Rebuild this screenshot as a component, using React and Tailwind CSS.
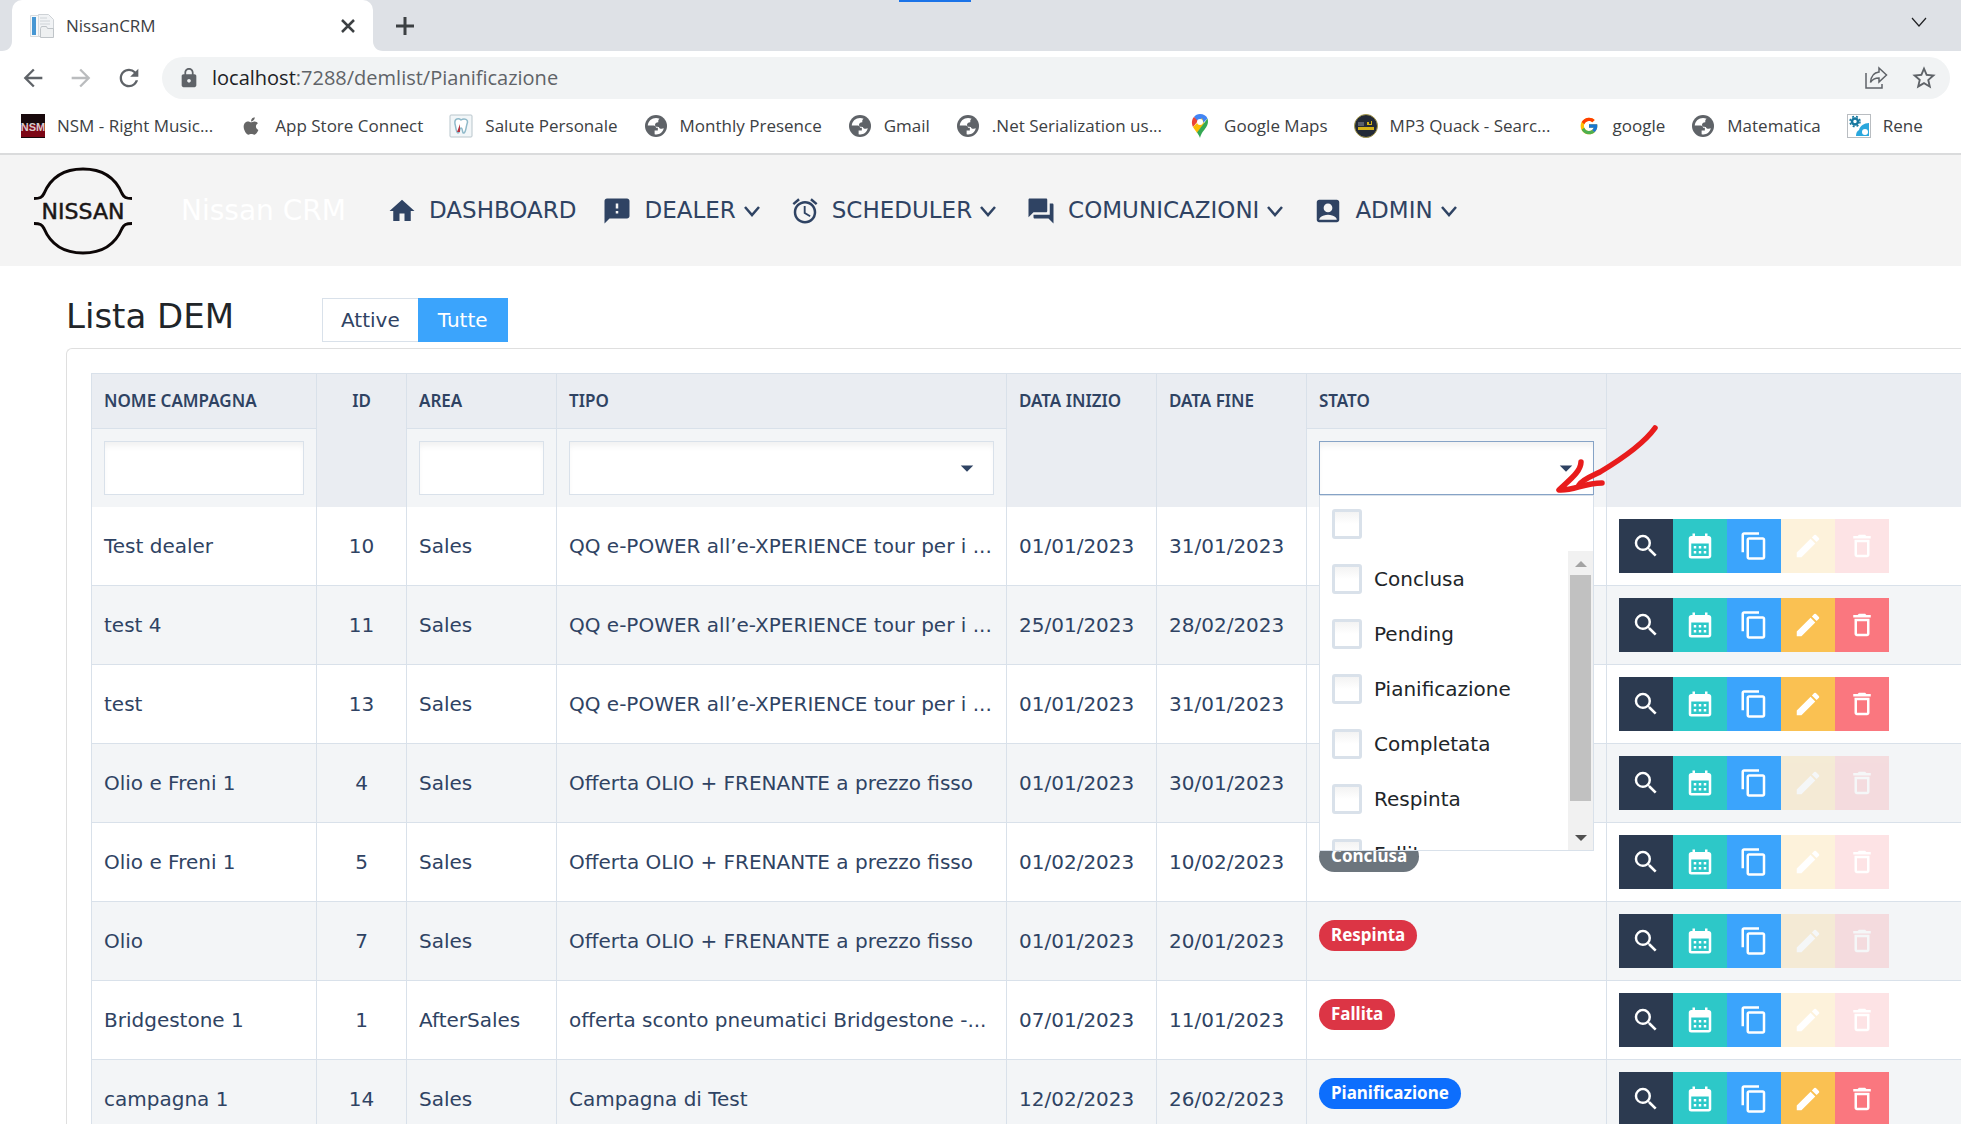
import React, { useState } from 'react';
import {
	MdAccountBox,
	MdAlarm,
	MdArrowBack,
	MdArrowDropDown,
	MdArrowForward,
	MdCalendarMonth,
	MdContentCopy,
	MdDeleteOutline,
	MdEdit,
	MdFeedback,
	MdForum,
	MdHome,
	MdLock,
	MdRefresh,
	MdSearch,
	MdStarBorder,
} from 'react-icons/md';
import { FaApple } from 'react-icons/fa';
import { FcGoogle } from 'react-icons/fc';

const GlobeIcon = () => (
	<svg viewBox="0 0 24 24" className="size-[22px]">
		<circle cx="12" cy="12" r="12" fill="#5f6368" />
		<path d="M3 11.500h6.500c1.500 0 2.500 1 2.500 2.500h2v3h-3.500v4c5 1 9-2 10-6.500-2 1-5 .5-5.500-1.500-1 0-3.500.2-4-1.500-.5-2 1-3.500 3.500-3.500V6c0-1 1-1.500 1.500-2C10 1.500 3.500 5 3 11.500z" fill="#fff" />
	</svg>
);

const PageIcon = () => (
	<svg viewBox="0 0 24 24" className="size-6 shrink-0">
		<path d="M8.500.5h10l5 5v17h-15z" fill="#f1f3f5" stroke="#ced2d6" />
		<path d="M.5 1.500h8v21h-8z" fill="#f7f9fa" stroke="#d8dcdf" />
		<path d="M2 3h4v18H2z" fill="#4797d3" />
		<path d="M10 4h7M10 7h10M10 10h10" stroke="#cfd4d8" />
		<path d="M10.500 14.500l1-2h5l1 2h6v9h-13z" fill="#eef0f1" stroke="#bfc4c8" />
	</svg>
);

const NsmIcon = () => (
	<svg viewBox="0 0 24 24" className="size-6">
		<rect width="24" height="24" fill="#18090c" />
		<rect y="11" width="24" height="12" fill="#7d0716" />
		<text x="12" y="17" fontSize="11" fontWeight="bold" textAnchor="middle" fill="#d9c9cb" fontFamily="Liberation Sans, sans-serif">NSM</text>
	</svg>
);

const ToothIcon = () => (
	<svg viewBox="0 0 24 24" className="size-6">
		<rect x="1" y="1" width="22" height="22" rx="1" fill="#f2f6f8" stroke="#b9c6cc" />
		<path d="M6 10c-1-6 4-6 6-4 3-2 8-1 6 4-1 3-1 8-3 9s-1-5-3-5-1 5-3 5-2-6-3-9z" fill="#fff" stroke="#8fb9c9" strokeWidth="1.500" />
		<path d="M11 10l-3 8h3z" fill="#b5303c" />
	</svg>
);

const MapsIcon = () => (
	<svg viewBox="0 0 24 24" className="size-6">
		<path d="M12 0c3.500 0 6.300 1.700 7.500 4.500L12 12 6 3C7.300 1.200 9.500 0 12 0z" fill="#4285f4" />
		<path d="M6 3l4 4-5 6C3 9 4 5 6 3z" fill="#ea4335" />
		<path d="M5 13l9-9 2 6-7 9c-1-2-3-4-4-6z" fill="#fbbc04" />
		<path d="M19.500 4.500c1 3 .5 6-1.500 9-2 3-4.500 5-6 10.500-.7-2-1.500-3.500-3-5.500z" fill="#34a853" />
		<circle cx="12" cy="8" r="3" fill="#fff" />
	</svg>
);

const QuackIcon = () => (
	<svg viewBox="0 0 24 24" className="size-6">
		<circle cx="12" cy="12" r="11.500" fill="#222936" stroke="#a89a4a" />
		<path d="M4 9h6M4 11h6" stroke="#8d95a1" />
		<path d="M11 11h2V8h2v2h2V7h1v4zM4 13h16v3H4z" fill="#d3b116" />
	</svg>
);

const GearsIcon = () => (
	<svg viewBox="0 0 24 24" className="size-6">
		<rect x=".5" y=".5" width="23" height="23" fill="#fff" stroke="#b9bdc1" />
		<circle cx="8" cy="7.500" r="3" fill="none" stroke="#17789f" strokeWidth="2.500" />
		<circle cx="8" cy="7.500" r="5" fill="none" stroke="#17789f" strokeWidth="1.500" strokeDasharray="2 2" />
		<path d="M22 9v13H9c0-3 1-5 3-6 1-4 5-7 10-7z" fill="#2aa7dd" />
		<circle cx="18" cy="18" r="3" fill="#fff" />
	</svg>
);

const BOOKMARKS = [
	{ label: 'NSM - Right Music...', icon: <NsmIcon /> },
	{ label: 'App Store Connect', icon: <FaApple className="size-5 text-[#666]" /> },
	{ label: 'Salute Personale', icon: <ToothIcon /> },
	{ label: 'Monthly Presence', icon: <GlobeIcon /> },
	{ label: 'Gmail', icon: <GlobeIcon /> },
	{ label: '.Net Serialization us...', icon: <GlobeIcon /> },
	{ label: 'Google Maps', icon: <MapsIcon /> },
	{ label: 'MP3 Quack - Searc...', icon: <QuackIcon /> },
	{ label: 'google', icon: <FcGoogle className="size-5" /> },
	{ label: 'Matematica', icon: <GlobeIcon /> },
	{ label: 'Rene', icon: <GearsIcon /> },
];

const MENU = [
	{ label: 'DASHBOARD', icon: MdHome },
	{ label: 'DEALER', icon: MdFeedback, sub: true },
	{ label: 'SCHEDULER', icon: MdAlarm, sub: true },
	{ label: 'COMUNICAZIONI', icon: MdForum, sub: true },
	{ label: 'ADMIN', icon: MdAccountBox, sub: true },
];

const STATES = ['Conclusa', 'Pending', 'Pianificazione', 'Completata', 'Respinta', 'Fallita'];

const TOUR = 'QQ e-POWER all’e-XPERIENCE tour per i ...';
const OIL = 'Offerta OLIO + FRENANTE a prezzo fisso';

const CAMPAIGNS = [
	{ name: 'Test dealer', id: 10, area: 'Sales', type: TOUR, start: '01/01/2023', end: '31/01/2023' },
	{ name: 'test 4', id: 11, area: 'Sales', type: TOUR, start: '25/01/2023', end: '28/02/2023', editable: true },
	{ name: 'test', id: 13, area: 'Sales', type: TOUR, start: '01/01/2023', end: '31/01/2023', editable: true },
	{ name: 'Olio e Freni 1', id: 4, area: 'Sales', type: OIL, start: '01/01/2023', end: '30/01/2023' },
	{ name: 'Olio e Freni 1', id: 5, area: 'Sales', type: OIL, start: '01/02/2023', end: '10/02/2023', state: 'Conclusa' },
	{ name: 'Olio', id: 7, area: 'Sales', type: OIL, start: '01/01/2023', end: '20/01/2023', state: 'Respinta' },
	{ name: 'Bridgestone 1', id: 1, area: 'AfterSales', type: 'offerta sconto pneumatici Bridgestone -...', start: '07/01/2023', end: '11/01/2023', state: 'Fallita' },
	{ name: 'campagna 1', id: 14, area: 'Sales', type: 'Campagna di Test', start: '12/02/2023', end: '26/02/2023', state: 'Pianificazione', editable: true },
];

const BADGE_COLORS = {
	Conclusa: 'bg-[#6c757d]',
	Respinta: 'bg-[#dc3545]',
	Fallita: 'bg-[#dc3545]',
	Pianificazione: 'bg-[#0d6efd]',
};

function Browser() {
	return (
		<header className="bg-white font-['Open_Sans',sans-serif] text-[#3c4043]">
			<div className="relative flex h-[51px] bg-[#dee1e6] pl-[2px]">
				<svg viewBox="0 0 10 10" className="size-[10px] self-end"><path d="M10 0v10H0C6 10 10 6 10 0z" fill="#fff" /></svg>
				<div className="flex w-[361px] items-center rounded-t-[10px] bg-white pr-[15px] pl-[18px]">
					<PageIcon />
					<span className="ml-3 flex-1 text-[17px]">NissanCRM</span>
					<button aria-label="Close tab">
						<svg viewBox="0 0 20 20" className="size-5"><path d="M4 4l12 12M16 4L4 16" stroke="#3c4043" strokeWidth="2.500" /></svg>
					</button>
				</div>
				<svg viewBox="0 0 10 10" className="size-[10px] self-end"><path d="M0 0v10h10C4 10 0 6 0 0z" fill="#fff" /></svg>
				<button aria-label="New tab" className="ml-[10px]">
					<svg viewBox="0 0 24 24" className="size-6"><path d="M12 3v18M3 12h18" stroke="#3c4043" strokeWidth="3" /></svg>
				</button>
				<button aria-label="Search tabs" className="mr-8 mb-2 ml-auto">
					<svg viewBox="0 0 20 20" className="size-5"><path d="M3 6l7 8 7-8" fill="none" stroke="#202124" strokeWidth="1.200" /></svg>
				</button>
				<div className="absolute top-0 left-[899px] h-[2px] w-[72px] bg-[#1a73e8]" />
			</div>

			<div className="flex items-center pt-[6px] pr-[11px] pl-[19px]">
				<button aria-label="Back"><MdArrowBack className="size-7 text-[#5f6368]" /></button>
				<button aria-label="Forward" className="ml-5"><MdArrowForward className="size-7 text-[#babcbe]" /></button>
				<button aria-label="Reload" className="ml-5"><MdRefresh className="size-7 text-[#5f6368]" /></button>
				<div className="ml-[19px] flex h-[42px] flex-1 items-center rounded-full bg-[#f1f3f4] pr-3 pl-4">
					<MdLock className="size-[22px] text-[#5f6368]" />
					<p className="ml-3 flex-1 text-[20px] text-[#5f6368]"><span className="text-[#202124]">localhost</span>:7288/demlist/Pianificazione</p>
					<button aria-label="Share">
						<svg viewBox="0 0 24 24" className="size-6" fill="none" stroke="#5f6368" strokeWidth="1.500">
							<path d="M2 7v15h16v-4" />
							<path d="M15 2l7.500 7-7.500 7v-4c-4 0-6.500 1-8.500 4.500C7 10 10 6.500 15 6z" />
						</svg>
					</button>
					<button aria-label="Bookmark" className="ml-[22px]"><MdStarBorder className="size-7 text-[#5f6368]" /></button>
				</div>
			</div>

			<nav className="flex h-14 items-center gap-[26px] overflow-hidden border-b-2 border-[#dadbdc] pl-[21px] text-[17px] whitespace-nowrap">
				{BOOKMARKS.map((item) => (
					<a key={item.label} href="#" className="flex items-center gap-3">
						<span className="flex size-6 items-center justify-center">{item.icon}</span>
						{item.label}
					</a>
				))}
			</nav>
		</header>
	);
}

function Navbar() {
	return (
		<nav className="flex h-[111px] items-center bg-[#f4f4f4] pl-[30px] text-[23px] text-[#2f4363]">
			<svg viewBox="0 0 106 88" className="h-[88px] w-[106px]" role="img" aria-label="Nissan logo">
				<path d="M4 31.500c6 0 8-1 10-5C21 10 35 2 53 2s32 8 39 24.500c2 4 4 5 10 5M4 56.500c6 0 8 1 10 5C21 78 35 86 53 86s32-8 39-24.500c2-4 4-5 10-5" fill="none" stroke="#0c0606" strokeWidth="3" />
				<text x="53" y="52" textAnchor="middle" fontSize="22" fill="#1a1616" stroke="#1a1616" strokeWidth=".5" fontFamily="DejaVu Sans, sans-serif">NISSAN</text>
			</svg>
			<a href="#" className="ml-[45px] w-[206px] text-[28px] text-white">Nissan CRM</a>
			<div className="flex items-center gap-[26px]">
				{MENU.map((item) => (
					<a key={item.label} href="#" className="flex items-center">
						<item.icon className="mr-3 size-[30px]" />
						{item.label}
						{item.sub && (
							<svg viewBox="0 0 24 24" className="ml-1 size-6"><path d="M5 8l7 8 7-8" fill="none" stroke="currentColor" strokeWidth="2.500" /></svg>
						)}
					</a>
				))}
			</div>
		</nav>
	);
}

const inputClass = 'block h-[54px] w-full border border-[#d9e1ea] bg-white px-3 font-normal shadow-[inset_0_6px_6px_-2px_rgba(0,0,0,0.06)] outline-none appearance-none rounded-none';

function StateCheck({ label, checked, onChange }) {
	return (
		<label className="flex h-[55px] items-center gap-3 pl-3 text-[20px] font-normal text-[#212529]">
			<input
				type="checkbox"
				checked={checked}
				onChange={onChange}
				aria-label={label || 'Tutti'}
				className="size-[30px] appearance-none rounded-[3px] border-[3px] border-[#d9e1ea] bg-linear-to-b from-[#f3f3f3] to-white to-50% checked:bg-[#3ba4fc]"
			/>
			{label}
		</label>
	);
}

function StateFilter() {
	const [open, setOpen] = useState(true);
	const [selected, setSelected] = useState([]);

	const toggle = (state) => {
		setSelected(selected.includes(state) ? selected.filter((s) => s !== state) : [...selected, state]);
	};

	const toggleAll = () => {
		setSelected(selected.length === STATES.length ? [] : STATES);
	};

	return (
		<div className="relative">
			<button
				onClick={() => setOpen(!open)}
				aria-label="Filtro stato"
				aria-expanded={open}
				className="flex h-[54px] w-full items-center justify-end border border-[#86a3c6] bg-white pr-3 shadow-[inset_0_6px_6px_-2px_rgba(0,0,0,0.06)]"
			>
				<MdArrowDropDown className="size-[30px]" />
			</button>
			{open && (
				<div className="absolute top-full left-0 z-10 w-full border border-[#d9e1ea] bg-white">
					<StateCheck checked={selected.length === STATES.length} onChange={toggleAll} />
					<div className="flex h-[299px] overflow-hidden">
						<div className="flex-1">
							{STATES.map((state) => (
								<StateCheck key={state} label={state} checked={selected.includes(state)} onChange={() => toggle(state)} />
							))}
						</div>
						<div className="flex w-[25px] flex-col items-center bg-[#f1f1f1]">
							<svg viewBox="0 0 24 24" className="size-6"><path d="M6 16l6-6 6 6z" fill="#a3a3a3" /></svg>
							<div className="h-[226px] w-[21px] bg-[#c1c1c1]" />
							<svg viewBox="0 0 24 24" className="mt-auto size-6"><path d="M6 9l6 6 6-6z" fill="#505050" /></svg>
						</div>
					</div>
				</div>
			)}
			<svg viewBox="0 0 120 80" className="pointer-events-none absolute -top-5 left-[231px] z-20 h-20 w-[120px]" fill="none" stroke="#e81c1c" strokeWidth="5.500" strokeLinecap="round" strokeLinejoin="round">
				<path d="M105 7C92 25 65 42 50 51C42 55 33 58 29 64" />
				<path d="M31 41C31 51 18 60 9 69C24 70 33 62 52 62" />
			</svg>
		</div>
	);
}

function Actions({ editable }) {
	return (
		<div className="flex text-[30px] text-white">
			<button aria-label="Dettagli" className="flex size-[54px] items-center justify-center bg-[#2c3a50]"><MdSearch /></button>
			<button aria-label="Pianifica" className="flex size-[54px] items-center justify-center bg-[#2dc8c8]"><MdCalendarMonth /></button>
			<button aria-label="Duplica" className="flex size-[54px] items-center justify-center bg-[#3ba4fc]"><MdContentCopy /></button>
			<button aria-label="Modifica" disabled={!editable} className="flex size-[54px] items-center justify-center bg-[#fac152] disabled:opacity-20"><MdEdit /></button>
			<button aria-label="Elimina" disabled={!editable} className="flex size-[54px] items-center justify-center bg-[#fa777f] disabled:opacity-20"><MdDeleteOutline /></button>
		</div>
	);
}

const headClass = "h-14 border-y border-l border-[#d9e1ea] bg-[#eaedf2] px-3 font-['Noto_Sans',sans-serif] text-[17px] font-semibold";
const spanClass = "border-t border-l border-[#d9e1ea] bg-[#eaedf2] px-3 pt-[14px] align-top font-['Noto_Sans',sans-serif] text-[17px] font-semibold";
const filterClass = 'border-l border-[#d9e1ea] bg-[#f3f5f7] p-3';
const cellClass = 'truncate border-b border-l border-[#d9e1ea] px-3';

function CampaignTable() {
	return (
		<table className="w-full table-fixed border-separate border-spacing-0 text-left text-[20px] text-[#2f4363]">
			<colgroup>
				<col className="w-[225px]" />
				<col className="w-[90px]" />
				<col className="w-[150px]" />
				<col className="w-[450px]" />
				<col className="w-[150px]" />
				<col className="w-[150px]" />
				<col className="w-[300px]" />
				<col />
			</colgroup>
			<thead>
				<tr>
					<th className={headClass}>NOME CAMPAGNA</th>
					<th rowSpan={2} className={`${spanClass} text-center`}>ID</th>
					<th className={headClass}>AREA</th>
					<th className={headClass}>TIPO</th>
					<th rowSpan={2} className={spanClass}>DATA INIZIO</th>
					<th rowSpan={2} className={spanClass}>DATA FINE</th>
					<th className={headClass}>STATO</th>
					<th rowSpan={2} className={spanClass}></th>
				</tr>
				<tr>
					<th className={filterClass}><input aria-label="Filtro nome campagna" className={inputClass} /></th>
					<th className={filterClass}><input aria-label="Filtro area" className={inputClass} /></th>
					<th className={filterClass}>
						<div className="relative">
							<select aria-label="Filtro tipo" className={inputClass}>
								<option value=""></option>
							</select>
							<MdArrowDropDown className="pointer-events-none absolute top-3 right-3 size-[30px]" />
						</div>
					</th>
					<th className={filterClass}><StateFilter /></th>
				</tr>
			</thead>
			<tbody>
				{CAMPAIGNS.map((row) => (
					<tr key={row.id} className="h-[79px] even:bg-[#f3f5f7]">
						<td className={cellClass}>{row.name}</td>
						<td className={`${cellClass} text-center`}>{row.id}</td>
						<td className={cellClass}>{row.area}</td>
						<td className={cellClass}>{row.type}</td>
						<td className={cellClass}>{row.start}</td>
						<td className={cellClass}>{row.end}</td>
						<td className="border-b border-l border-[#d9e1ea] px-3 pt-[18px] align-top">
							{row.state && (
								<span className={`${BADGE_COLORS[row.state]} block h-[31px] w-fit rounded-full px-3 font-['Noto_Sans',sans-serif] text-[17px] leading-[29px] font-bold text-white`}>{row.state}</span>
							)}
						</td>
						<td className={cellClass}><Actions editable={row.editable} /></td>
					</tr>
				))}
			</tbody>
		</table>
	);
}

function App() {
	const [filter, setFilter] = useState('Tutte');

	return (
		<div className="h-screen overflow-hidden bg-white font-['DejaVu_Sans',sans-serif]">
			<Browser />
			<Navbar />
			<main className="pt-8 pl-[66px]">
				<div className="flex items-start">
					<h1 className="w-[256px] text-[34px] leading-9 text-[#212529]">Lista DEM</h1>
					<div className="flex h-11 text-[20px] text-[#2f4363]">
						{['Attive', 'Tutte'].map((name) => (
							<button
								key={name}
								onClick={() => setFilter(name)}
								className={filter === name ? 'bg-[#3ba4fc] px-5 text-white' : 'border border-r-0 border-[#d9e1ea] bg-white px-[18px]'}
							>
								{name}
							</button>
						))}
					</div>
				</div>
				<section className="mt-[6px] rounded-l-[6px] border-y border-l border-[#dfdfdf] py-6 pl-6">
					<CampaignTable />
				</section>
			</main>
		</div>
	);
}

export default App;
